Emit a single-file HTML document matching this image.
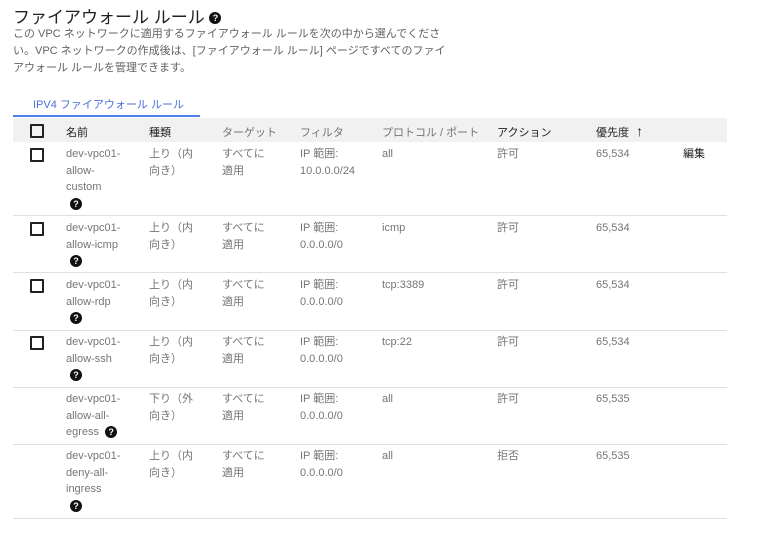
<!DOCTYPE html>
<html><head><meta charset="utf-8"><style>
body{margin:0;width:768px;height:533px;background:#fff;font-family:"Liberation Sans","Noto Sans CJK JP",sans-serif;position:relative;overflow:hidden;color:#757575}
.a{position:absolute;white-space:nowrap}
.t{font-size:17px;color:#212121;left:13px;top:3px}
.d{font-size:11px;color:#616161;left:13px;line-height:17px}
.hd{position:absolute;left:13px;top:118px;width:714px;height:24px;background:#f1f1f1}
.c{font-size:11px;line-height:16.5px;position:absolute}
.cb{position:absolute;width:10px;height:10px;border:2px solid #212121;border-radius:1px;left:30px}
.q{display:inline-block;width:12px;height:12px;border-radius:50%;background:#111;color:#fff;font-size:9px;line-height:12px;text-align:center;font-weight:bold;vertical-align:middle}
.ln{position:absolute;left:13px;width:714px;height:1px;background:#e0e0e0}
.h{font-size:11px;position:absolute;top:124px}
</style></head><body>
<div class="a t">ファイアウォール ルール <span class="q" style="width:12px;height:12px;line-height:12px;vertical-align:2px">?</span></div>
<div class="a d" style="top:26px">この VPC ネットワークに適用するファイアウォール ルールを次の中から選んでくださ</div>
<div class="a d" style="top:43px">い。VPC ネットワークの作成後は、[ファイアウォール ルール] ページですべてのファイ</div>
<div class="a d" style="top:60px">アウォール ルールを管理できます。</div>
<div class="a" style="left:33px;top:96px;font-size:11px;color:#4a70d8">IPV4 ファイアウォール ルール</div>
<div class="a" style="left:13px;top:115px;width:187px;height:2px;background:#4a80e8"></div>
<div class="hd"></div>
<div class="cb" style="top:124px"></div>
<div class="h" style="left:66px;color:#212121">名前</div>
<div class="h" style="left:149px;color:#212121">種類</div>
<div class="h" style="left:222px">ターゲット</div>
<div class="h" style="left:300px">フィルタ</div>
<div class="h" style="left:382px">プロトコル / ポート</div>
<div class="h" style="left:497px;color:#212121">アクション</div>
<div class="h" style="left:596px;color:#212121">優先度 <b style="font-size:14px;margin-left:4px;line-height:11px">↑</b></div>

<div class="ln" style="top:215px"></div>
<div class="ln" style="top:272px"></div>
<div class="ln" style="top:330px"></div>
<div class="ln" style="top:387px"></div>
<div class="ln" style="top:444px"></div>
<div class="ln" style="top:518px"></div>

<div class="cb" style="top:148px"></div>
<div class="c" style="left:66px;top:146px">dev-vpc01-<br>allow-<br>custom<br><span class="q" style="margin-left:4px">?</span></div>
<div class="c" style="left:149px;top:146px">上り（内<br>向き）</div>
<div class="c" style="left:222px;top:146px">すべてに<br>適用</div>
<div class="c" style="left:300px;top:146px">IP 範囲:<br>10.0.0.0/24</div>
<div class="c" style="left:382px;top:146px">all</div>
<div class="c" style="left:497px;top:146px">許可</div>
<div class="c" style="left:596px;top:146px">65,534</div>
<div class="c" style="left:683px;top:146px;color:#212121">編集</div>

<div class="cb" style="top:222px"></div>
<div class="c" style="left:66px;top:220px">dev-vpc01-<br>allow-icmp<br><span class="q" style="margin-left:4px">?</span></div>
<div class="c" style="left:149px;top:220px">上り（内<br>向き）</div>
<div class="c" style="left:222px;top:220px">すべてに<br>適用</div>
<div class="c" style="left:300px;top:220px">IP 範囲:<br>0.0.0.0/0</div>
<div class="c" style="left:382px;top:220px">icmp</div>
<div class="c" style="left:497px;top:220px">許可</div>
<div class="c" style="left:596px;top:220px">65,534</div>

<div class="cb" style="top:279px"></div>
<div class="c" style="left:66px;top:277px">dev-vpc01-<br>allow-rdp<br><span class="q" style="margin-left:4px">?</span></div>
<div class="c" style="left:149px;top:277px">上り（内<br>向き）</div>
<div class="c" style="left:222px;top:277px">すべてに<br>適用</div>
<div class="c" style="left:300px;top:277px">IP 範囲:<br>0.0.0.0/0</div>
<div class="c" style="left:382px;top:277px">tcp:3389</div>
<div class="c" style="left:497px;top:277px">許可</div>
<div class="c" style="left:596px;top:277px">65,534</div>

<div class="cb" style="top:336px"></div>
<div class="c" style="left:66px;top:334px">dev-vpc01-<br>allow-ssh<br><span class="q" style="margin-left:4px">?</span></div>
<div class="c" style="left:149px;top:334px">上り（内<br>向き）</div>
<div class="c" style="left:222px;top:334px">すべてに<br>適用</div>
<div class="c" style="left:300px;top:334px">IP 範囲:<br>0.0.0.0/0</div>
<div class="c" style="left:382px;top:334px">tcp:22</div>
<div class="c" style="left:497px;top:334px">許可</div>
<div class="c" style="left:596px;top:334px">65,534</div>

<div class="c" style="left:66px;top:391px">dev-vpc01-<br>allow-all-<br>egress <span class="q" style="margin-left:3px">?</span></div>
<div class="c" style="left:149px;top:391px">下り（外<br>向き）</div>
<div class="c" style="left:222px;top:391px">すべてに<br>適用</div>
<div class="c" style="left:300px;top:391px">IP 範囲:<br>0.0.0.0/0</div>
<div class="c" style="left:382px;top:391px">all</div>
<div class="c" style="left:497px;top:391px">許可</div>
<div class="c" style="left:596px;top:391px">65,535</div>

<div class="c" style="left:66px;top:448px">dev-vpc01-<br>deny-all-<br>ingress<br><span class="q" style="margin-left:4px">?</span></div>
<div class="c" style="left:149px;top:448px">上り（内<br>向き）</div>
<div class="c" style="left:222px;top:448px">すべてに<br>適用</div>
<div class="c" style="left:300px;top:448px">IP 範囲:<br>0.0.0.0/0</div>
<div class="c" style="left:382px;top:448px">all</div>
<div class="c" style="left:497px;top:448px">拒否</div>
<div class="c" style="left:596px;top:448px">65,535</div>
</body></html>
